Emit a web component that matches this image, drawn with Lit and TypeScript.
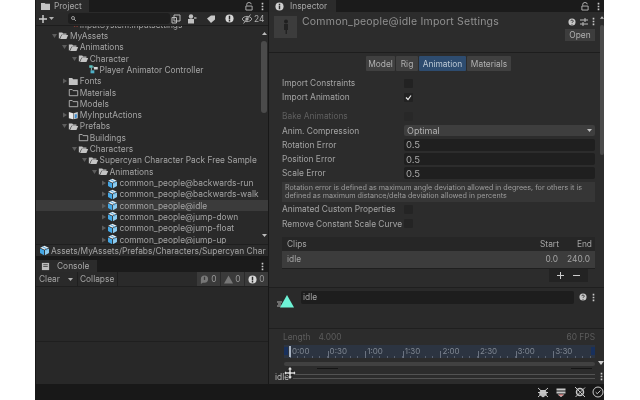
import { LitElement, css, html, svg } from 'lit';
import { customElement } from 'lit/decorators.js';

type Kind = 'open' | 'closed' | 'empty' | 'cube' | 'ctrl' | 'actions' | 'input';

interface TreeRow {
  name: string;
  depth: number;
  arrow?: 'down' | 'right';
  icon: Kind;
  selected?: boolean;
}

const ROWS: TreeRow[] = [
  { name: 'InputSystem.inputsettings', depth: 2, icon: 'input' },
  { name: 'MyAssets', depth: 1, arrow: 'down', icon: 'open' },
  { name: 'Animations', depth: 2, arrow: 'down', icon: 'open' },
  { name: 'Character', depth: 3, arrow: 'down', icon: 'open' },
  { name: 'Player Animator Controller', depth: 4, icon: 'ctrl' },
  { name: 'Fonts', depth: 2, arrow: 'right', icon: 'closed' },
  { name: 'Materials', depth: 2, icon: 'empty' },
  { name: 'Models', depth: 2, icon: 'empty' },
  { name: 'MyInputActions', depth: 2, arrow: 'right', icon: 'actions' },
  { name: 'Prefabs', depth: 2, arrow: 'down', icon: 'open' },
  { name: 'Buildings', depth: 3, icon: 'empty' },
  { name: 'Characters', depth: 3, arrow: 'down', icon: 'open' },
  { name: 'Supercyan Character Pack Free Sample', depth: 4, arrow: 'down', icon: 'open' },
  { name: 'Animations', depth: 5, arrow: 'down', icon: 'open' },
  { name: 'common_people@backwards-run', depth: 6, arrow: 'right', icon: 'cube' },
  { name: 'common_people@backwards-walk', depth: 6, arrow: 'right', icon: 'cube' },
  { name: 'common_people@idle', depth: 6, arrow: 'right', icon: 'cube', selected: true },
  { name: 'common_people@jump-down', depth: 6, arrow: 'right', icon: 'cube' },
  { name: 'common_people@jump-float', depth: 6, arrow: 'right', icon: 'cube' },
  { name: 'common_people@jump-up', depth: 6, arrow: 'right', icon: 'cube' },
];

const TIMES = ['0:00', '0:30', '1:00', '1:30', '2:00', '2:30', '3:00', '3:30'];

const rowIcon = (k: Kind) => {
  const paths = {
    open: svg`<path d="M1 3h4l1 1h4v1.500H4L2 10H1z" fill="#c4c4c4"/><path d="M4.500 6H12l-2 4.500H2.500z" fill="#c4c4c4"/>`,
    closed: svg`<path d="M1 2.500h4l1 1.300h5.500v6.700H1z" fill="#c4c4c4"/>`,
    empty: svg`<path d="M1.500 3h3.500l1 1.300h5.500v6H1.500z" fill="none" stroke="#c0c0c0"/>`,
    cube: svg`<path d="M6.500 1 11.500 3.200 6.500 5.600 1.500 3.200z" fill="#e6eef4"/><path d="M1.200 4 6 6.300V12L1.200 9.600z" fill="#45a8e6"/><path d="M11.800 4 7 6.300V12l4.800-2.400z" fill="#8ccbf0"/><path d="M4 2 9 4.400V6.400" fill="none" stroke="#3d9bd8"/>`,
    ctrl: svg`<rect x="1.500" y="1.500" width="4" height="3" fill="#5fc3c0"/><rect x="7" y="3.500" width="4.500" height="3" fill="#d8d8d8"/><rect x="3" y="7.500" width="4.500" height="3.500" fill="#4fb0c8"/><path d="M4 4.500v3M5.500 3.500H7" stroke="#9adcd8"/>`,
    actions: svg`<path d="M1 2.500 6 3.800V11L1 9.700z" fill="#e8e8e8"/><path d="M6.500 3.800 11.500 2.500V9.700L6.500 11z" fill="#d0d0d0"/><path d="M8 5h2.500v4L8 10z" fill="#3f8fd2"/>`,
    input: svg`<path d="M2 4h3v4H2z" fill="#3f8fd2"/><path d="M7 3h1.500v6H7zM10 3h1.500v6H10z" fill="#d84a3a"/>`,
  };
  return html`<svg class="ti" viewBox="0 0 13 13">${paths[k]}</svg>`;
};

const dots = html`<svg class="dots" viewBox="0 0 3 11"><path d="M.5 1h2v2h-2zM.5 4.500h2v2h-2zM.5 8h2v2h-2z" fill="#c8c8c8"/></svg>`;
const lock = html`<svg class="lock" viewBox="0 0 9 10"><path d="M2 4V2.500a2.500 2 0 0 1 5 0M1 4.500h7v4.500H1z" fill="none" stroke="#bbb"/></svg>`;
const help = html`<svg class="help" viewBox="0 0 9 9"><circle cx="4.500" cy="4.500" r="4" fill="#c8c8c8"/><path d="M3.200 3.500a1.300 1.300 0 1 1 1.900 1.200c-.5.300-.6.500-.6 1" fill="none" stroke="#282828"/><path d="M4 6.700h1v1H4z" fill="#282828"/></svg>`;
const bang = html`<svg class="bang" viewBox="0 0 10 10"><circle cx="5" cy="5" r="4.500" fill="#d8d8d8"/><path d="M4.200 2h1.600v4H4.200zM4.200 6.800h1.600v1.500H4.200z" fill="#2a2a2a"/></svg>`;
const bug = html`<svg class="stat" viewBox="0 0 12 12"><path d="M3.500 4.500h5l.8 4-3.300 2.500-3.300-2.500zM1 2l10 9M11 2 1 11M1 6.500h10" stroke="#c8c8c8" fill="#bdbdbd"/></svg>`;
const layers = html`<svg class="stat" viewBox="0 0 12 12"><path d="M1.500 2.500h9v2h-9zM1.500 5.500h9v2h-9z" fill="#c8c8c8"/><path d="M2.500 8.500h7L6 11z" fill="#e0e0e0"/><path d="M4 9h4" stroke="#d05050"/></svg>`;
const net = html`<svg class="stat" viewBox="0 0 12 12"><circle cx="6" cy="6" r="3.500" fill="none" stroke="#c8c8c8" stroke-width="1.500"/><path d="M1 1l10 10M11 1.500 1.500 11" stroke="#c8c8c8"/></svg>`;
const ok = html`<svg class="stat" viewBox="0 0 12 12"><circle cx="6" cy="6" r="5" fill="none" stroke="#c8c8c8"/><path d="M3.700 6.200 5.300 7.700 8.500 4.500" fill="none" stroke="#c8c8c8"/></svg>`;

@customElement('app-root')
export class AppRoot extends LitElement {
  static styles = css`
    :host {
      display: block;
      width: 640px;
      height: 400px;
      overflow: hidden;
      background: #fff;
      font-family: Inter, 'Liberation Sans', sans-serif;
      font-size: 8.4px;
      color: #a4a4a4;
    }
    svg { display: block; flex: none; }
    .editor {
      position: relative;
      margin-left: 35px;
      width: 569px;
      height: 400px;
      background: #181818;
      display: flex;
      flex-direction: column;
      filter: blur(0.4px);
    }
    .main { display: flex; flex: none; height: 384px; gap: 1px; }

    /* left column */
    .left { width: 232px; flex: none; display: flex; flex-direction: column; padding-left: 1px; }
    .tabbar { height: 12px; flex: none; display: flex; align-items: center; background: #1b1b1b; }
    .tab {
      height: 100%;
      display: flex;
      align-items: center;
      gap: 4px;
      background: #2b2b2b;
      color: #a8a8a8;
      box-sizing: border-box;
    }
    .tab-project { width: 53px; padding-left: 5px; }
    .tab-console { width: 61px; padding-left: 5px; gap: 7px; }
    .tab-inspector { width: 67px; padding-left: 6px; gap: 6px; }
    .tab-right { margin-left: auto; display: flex; align-items: center; gap: 8px; padding-right: 4px; }
    .dots { width: 3px; height: 9px; }
    .lock { width: 8px; height: 9px; }
    .tabicon { width: 9px; height: 9px; }

    .ptools {
      height: 13px;
      flex: none;
      display: flex;
      align-items: center;
      background: #2a2a2a;
      border-bottom: 1px solid #1d1d1d;
    }
    .plus { width: 8px; height: 8px; margin-left: 3px; }
    .caret { width: 5px; height: 3px; }
    .ptools .caret { margin-left: 2px; }
    .search {
      width: 102px;
      height: 11px;
      margin-left: 14px;
      flex: none;
      background: #1e1e1e;
      border-radius: 3px;
      display: flex;
      align-items: center;
      padding-left: 3px;
      box-sizing: border-box;
    }
    .tool { width: 10px; height: 10px; }
    .ptools .t1 { margin-left: 1px; }
    .ptools .t2 { margin-left: 6px; }
    .ptools .t3 { margin-left: 9px; }
    .ptools .bang { width: 9px; height: 9px; margin-left: 9px; }
    .ptools .t5 { margin-left: 8px; }
    .ptools .count { margin-left: 2px; color: #b0b0b0; }

    .treewrap { position: relative; height: 218px; flex: none; overflow: hidden; background: #292929; }
    .tree { margin-top: -7px; }
    .row {
      height: 11.32px;
      width: 222px;
      display: flex;
      align-items: center;
      white-space: nowrap;
    }
    .row.sel { background: #3b3b3b; }
    .arrow { width: 5px; height: 6px; margin-right: 1px; }
    .noarrow { width: 6px; flex: none; }
    .ti { width: 11px; height: 11px; margin-right: 1px; }
    .vtrack { position: absolute; right: 1px; top: 6px; width: 6px; bottom: 0; display: flex; flex-direction: column; align-items: center; }
    .thumb { width: 6px; height: 72px; margin-top: 6px; border-radius: 3px; background: #4b4b4b; }
    .up { width: 5px; height: 3px; }
    .down { margin-top: auto; margin-bottom: 7px; width: 5px; height: 3px; }

    .pathbar {
      height: 12px;
      flex: none;
      display: flex;
      align-items: center;
      padding-left: 3px;
      overflow: hidden;
      white-space: nowrap;
      background: #2a2a2a;
      border-top: 1px solid #1f1f1f;
      box-sizing: border-box;
    }
    .gutter { height: 4px; flex: none; background: #191919; }
    .console { flex: 1; display: flex; flex-direction: column; }
    .ctools {
      height: 14px;
      flex: none;
      display: flex;
      align-items: center;
      background: #2a2a2a;
      border-bottom: 1px solid #1f1f1f;
    }
    .clear { padding: 0 4px 0 3px; }
    .cdrop { width: 13px; display: flex; justify-content: center; border-right: 1px solid #1f1f1f; height: 100%; align-items: center; }
    .collapse { padding: 0 3px 0 2px; height: 100%; display: flex; align-items: center; border-right: 1px solid #1f1f1f; }
    .counters { margin-left: auto; display: flex; gap: 1px; height: 100%; }
    .counter {
      width: 23px;
      display: flex;
      align-items: center;
      justify-content: center;
      gap: 2px;
      background: #3a3a3a;
      color: #9a9a9a;
    }
    .counter svg { width: 9px; height: 9px; }
    .logs { height: 54px; flex: none; background: #282828; border-bottom: 1px solid #1f1f1f; }
    .stack { flex: 1; background: #282828; }

    /* inspector */
    .insp { flex: 1; display: flex; flex-direction: column; min-width: 0; position: relative; background: #2c2c2c; }
    .insp .tabbar { background: #1b1b1b; }
    .ihead { height: 40px; flex: none; display: flex; border-bottom: 1px solid #1d1d1d; }
    .thumbnail {
      width: 23px;
      height: 22px;
      margin: 4px 0 0 5px;
      background: #3c3c3c;
      display: flex;
      align-items: center;
      justify-content: center;
    }
    .thumbnail svg { width: 8px; height: 16px; }
    .ititle { margin: 3px 0 0 5px; font-size: 10.5px; letter-spacing: 0.2px; color: #909090; flex: 1; white-space: nowrap; }
    .iright { width: 40px; display: flex; flex-direction: column; align-items: flex-end; padding-right: 9px; flex: none; }
    .iicons { display: flex; align-items: center; gap: 4px; margin-top: 5px; }
    .help { width: 8px; height: 8px; }
    .sliders { width: 8px; height: 8px; }
    .open {
      margin-top: 3px;
      width: 30px;
      height: 12px;
      background: #3d3d3d;
      display: flex;
      align-items: center;
      justify-content: center;
      color: #b0b0b0;
    }
    .ibody { flex: 1; display: flex; flex-direction: column; padding: 3px 9px 0 13px; min-height: 0; }
    .tabs { display: flex; height: 15px; margin-left: 84px; gap: 1px; flex: none; }
    .tabs span {
      display: flex;
      align-items: center;
      justify-content: center;
      background: #404040;
      color: #b0b0b0;
      border-radius: 1px;
    }
    .tabs .active { background: #2e4c6f; color: #bcc8d4; }
    .prop { height: 14.2px; flex: none; display: flex; align-items: center; white-space: nowrap; }
    .prop .lab { width: 122px; flex: none; }
    .dim { color: #5f5f5f; }
    .check { width: 9px; height: 9px; background: #222; border-radius: 1px; display: flex; align-items: center; justify-content: center; }
    .check svg { width: 7px; height: 7px; }
    .check.off { background: #242424; }
    .dim .check.off { background: #282828; }
    .field { flex: 1; height: 12px; background: #1f1f1f; border-radius: 2px; display: flex; align-items: center; padding-left: 2px; color: #a8a8a8; font-size: 9.5px; }
    .drop { flex: 1; height: 11px; background: #3e3e3e; border-radius: 2px; display: flex; align-items: center; padding: 0 3px; color: #b0b0b0; justify-content: space-between; font-size: 9px; }
    .hint {
      height: 20px;
      margin-top: 2px;
      background: #363636;
      font-size: 7.2px;
      line-height: 8.6px;
      padding: 1.5px 3px;
      box-sizing: border-box;
      color: #9c9c9c;
      flex: none;
      white-space: nowrap;
    }
    .clips { margin-top: 6px; flex: none; }
    .chead { height: 14px; background: #262626; display: flex; align-items: center; padding: 0 3px 0 5px; }
    .chead .st { margin-left: auto; }
    .chead .en { margin-left: 18px; }
    .crow { height: 17px; background: #3c3c3c; display: flex; align-items: center; padding: 0 5px; border-bottom: 1px solid #1f1f1f; }
    .crow .st { margin-left: auto; }
    .crow .en { margin-left: 9px; }
    .cfoot { margin-left: auto; margin-right: 7px; width: 39px; height: 13px; background: #232323; display: flex; align-items: center; justify-content: space-around; padding: 0 4px; box-sizing: border-box; }
    .cfoot svg { width: 7px; height: 7px; }

    .pv {
      margin: 5px -9px 0 -13px;
      height: 37px;
      flex: none;
      display: flex;
      border-top: 1px solid #1f1f1f;
      border-bottom: 1px solid #1f1f1f;
      background: #2a2a2a;
      padding: 3px 9px 0 8px;
    }
    .pvicon { width: 17px; height: 13px; margin-top: 4px; }
    .pvfield { flex: 1; height: 13px; margin: 0 5px 0 7px; background: #1d1d1d; border-radius: 2px; padding-left: 2px; display: flex; align-items: center; }
    .pvright { display: flex; align-items: center; gap: 5px; height: 13px; }
    .lenrow { height: 15px; flex: none; display: flex; align-items: center; color: #5c5c5c; padding-left: 1px; margin-top: 1px; }
    .lenrow .v { margin-left: 8px; }
    .lenrow .fps { margin-left: auto; }
    .time {
      height: 13px;
      margin-left: 2px;
      flex: none;
      background: #2c3441;
      display: flex;
      align-items: center;
      padding-left: 6px;
      position: relative;
    }
    .time span {
      width: 37.6px;
      flex: none;
      height: 100%;
      display: flex;
      align-items: center;
      padding-left: 2px;
      box-sizing: border-box;
      font-size: 8px;
      color: #7f8792;
      background:
        linear-gradient(#6a7280, #6a7280) 0 100% / 1px 7px no-repeat,
        repeating-linear-gradient(90deg, transparent 0 6.52px, #596170 6.52px 7.52px) 0 100% / 100% 2px no-repeat;
    }
    .playhead { position: absolute; left: 5px; top: 1px; width: 2px; height: 11px; background: #a9b4c4; }
    .mk { position: absolute; top: 2px; width: 4px; height: 8px; background: #18305c; }
    .barrow { height: 4px; margin: 4px 0 0 2px; flex: none; background: #414141; border-radius: 2px; }
    .blip { height: 1px; margin-top: 2px; flex: none; position: relative; }
    .blip i { position: absolute; left: 35px; width: 21px; height: 1px; background: #151515; }
    .blip b { position: absolute; right: 3px; width: 21px; height: 1px; background: #151515; }
    .foot { height: 14px; margin: 1px -9px 0 -7px; display: flex; align-items: center; flex: none; color: #b8b8b8; padding-right: 1px; background: #2c2c2c; }
    .line { flex: 1; height: 3px; margin: 0 5px 0 4px; border-top: 1px solid #525252; border-bottom: 1px solid #525252; }
    .ibar { position: absolute; right: 0; top: 25px; width: 4px; height: 130px; background: #4a4a4a; border-radius: 2px; }
    .iup { position: absolute; right: 0; top: 16px; width: 4px; height: 3px; }
    .downtri { position: absolute; right: 0; top: 361px; width: 6px; height: 4px; }
    .cursor { position: absolute; left: 15px; top: 366px; width: 12px; height: 14px; }

    .status { flex: 1; display: flex; align-items: center; justify-content: flex-end; gap: 6.5px; }
    .stat { width: 12px; height: 12px; }
  `;

  private row(r: TreeRow) {
    const pad = 6 + r.depth * 9.9;
    return html`<div class="row ${r.selected ? 'sel' : ''}" style="padding-left:${pad}px">
      ${r.arrow === 'down'
        ? html`<svg class="arrow" viewBox="0 0 5 6"><path d="M0 1h5L2.500 5z" fill="#5c5c5c"/></svg>`
        : r.arrow === 'right'
          ? html`<svg class="arrow" viewBox="0 0 5 6"><path d="M1 .5 5 3 1 5.500z" fill="#5c5c5c"/></svg>`
          : html`<span class="noarrow"></span>`}
      ${rowIcon(r.icon)}<span>${r.name}</span>
    </div>`;
  }

  render() {
    return html`<div class="editor">
      <div class="main">
        <div class="left">
          <div class="tabbar">
            <div class="tab tab-project">
              <svg class="tabicon" viewBox="0 0 10 10"><path d="M0 1h4l1 1h5v7H0z" fill="#c4c4c4"/></svg>Project
            </div>
            <div class="tab-right">${lock}${dots}</div>
          </div>
          <div class="ptools">
            <svg class="plus" viewBox="0 0 8 8"><path d="M3.300 0h1.400v3.300H8v1.400H4.700V8H3.300V4.700H0V3.300h3.300z" fill="#d0d0d0"/></svg>
            <svg class="caret" viewBox="0 0 5 3"><path d="M0 0h5L2.500 3z" fill="#b0b0b0"/></svg>
            <div class="search">
              <svg width="5" height="5" viewBox="0 0 5 5"><circle cx="2" cy="2" r="1.500" fill="none" stroke="#999"/><path d="M3 3l2 2" stroke="#999"/></svg>
            </div>
            <svg class="tool t1" viewBox="0 0 10 10"><path d="M3 1h6v6H3zM1 3.500h4.500V9H1z" fill="none" stroke="#b8b8b8"/></svg>
            <svg class="tool t2" viewBox="0 0 10 10"><circle cx="4" cy="2.500" r="2.200" fill="#c0c0c0"/><path d="M1 5h6v4.500H1z" fill="#c0c0c0"/><path d="M7 3h2.500v2H7z" fill="#8a8a8a"/></svg>
            <svg class="tool t3" viewBox="0 0 10 10"><path d="M1 4.500 5 1.500h4v4l-4 3.500z" fill="#c8c8c8"/></svg>
            ${bang}
            <svg class="tool t5" viewBox="0 0 10 10"><path d="M0 5c2-3.500 8-3.500 10 0-2 3.500-8 3.500-10 0z" fill="none" stroke="#a8a8a8"/><circle cx="5" cy="5" r="1.700" fill="#a8a8a8"/><path d="M1.500 9.500 8.500 .5" stroke="#a8a8a8"/></svg>
            <span class="count">24</span>
          </div>
          <div class="treewrap">
            <div class="tree">${ROWS.map((r) => this.row(r))}</div>
            <div class="vtrack">
              <svg class="up" viewBox="0 0 5 3"><path d="M0 3h5L2.500 0z" fill="#bbb"/></svg>
              <div class="thumb"></div>
              <svg class="down" viewBox="0 0 5 3"><path d="M0 0h5L2.500 3z" fill="#bbb"/></svg>
            </div>
          </div>
          <div class="pathbar">${rowIcon('cube')}<span>Assets/MyAssets/Prefabs/Characters/Supercyan Char</span></div>
          <div class="gutter"></div>
          <div class="console">
            <div class="tabbar">
              <div class="tab tab-console">
                <svg class="tabicon" viewBox="0 0 10 10"><path d="M1 1h8v8H1z" fill="#bdbdbd"/><path d="M2.500 3h5M2.500 5h5" stroke="#4a4a4a"/></svg>Console
              </div>
              <div class="tab-right">${dots}</div>
            </div>
            <div class="ctools">
              <span class="clear">Clear</span>
              <span class="cdrop"><svg class="caret" viewBox="0 0 5 3"><path d="M0 0h5L2.500 3z" fill="#b0b0b0"/></svg></span>
              <span class="collapse">Collapse</span>
              <div class="counters">
                <span class="counter"><svg viewBox="0 0 10 10"><path d="M1 4.500a4 4 0 1 1 4 4H3L1 10z" fill="#777"/><path d="M4.300 2h1.400v3.500H4.300z" fill="#3a3a3a"/></svg>0</span>
                <span class="counter"><svg viewBox="0 0 10 10"><path d="M5 .5 10 9.500H0z" fill="#777"/></svg>0</span>
                <span class="counter">${bang}0</span>
              </div>
            </div>
            <div class="logs"></div>
            <div class="stack"></div>
          </div>
        </div>

        <div class="insp">
          <div class="tabbar">
            <div class="tab tab-inspector">
              <svg class="tabicon" viewBox="0 0 10 10"><circle cx="5" cy="5" r="4.500" fill="#d0d0d0"/><path d="M4.200 2h1.600v1.500H4.200zM4.200 4.300h1.600V8H4.200z" fill="#2a2a2a"/></svg>Inspector
            </div>
            <div class="tab-right">${lock}${dots}</div>
          </div>
          <div class="ihead">
            <div class="thumbnail"><svg viewBox="0 0 8 16"><circle cx="4" cy="2.500" r="2" fill="#1f1f1f"/><path d="M2 5h4v6H5v4H3.500v-4H2z" fill="#222"/></svg></div>
            <div class="ititle">Common_people@idle Import Settings</div>
            <div class="iright">
              <div class="iicons">
                ${help}
                <svg class="sliders" viewBox="0 0 8 8"><path d="M0 2h8M0 6h8" stroke="#bbb"/><path d="M5 0v4M3 4v4" stroke="#bbb"/></svg>
                ${dots}
              </div>
              <div class="open">Open</div>
            </div>
          </div>
          <div class="ibody">
            <div class="tabs">
              <span style="width:29px">Model</span>
              <span style="width:22px">Rig</span>
              <span style="width:47px" class="active">Animation</span>
              <span style="width:44px">Materials</span>
            </div>
            <div style="height:5px;flex:none"></div>
            <div class="prop"><span class="lab">Import Constraints</span><span class="check"></span></div>
            <div class="prop"><span class="lab">Import Animation</span><span class="check"><svg viewBox="0 0 7 7"><path d="M1 3.500 3 5.500 6 1.500" fill="none" stroke="#e8e8e8" stroke-width="1.200"/></svg></span></div>
            <div style="height:5px;flex:none"></div>
            <div class="prop dim"><span class="lab">Bake Animations</span><span class="check off"></span></div>
            <div class="prop"><span class="lab">Anim. Compression</span><span class="drop">Optimal<svg class="caret" viewBox="0 0 5 3"><path d="M0 0h5L2.500 3z" fill="#c0c0c0"/></svg></span></div>
            <div class="prop"><span class="lab">Rotation Error</span><span class="field">0.5</span></div>
            <div class="prop"><span class="lab">Position Error</span><span class="field">0.5</span></div>
            <div class="prop"><span class="lab">Scale Error</span><span class="field">0.5</span></div>
            <div class="hint">Rotation error is defined as maximum angle deviation allowed in degrees, for others it is<br />defined as maximum distance/delta deviation allowed in percents</div>
            <div class="prop"><span class="lab">Animated Custom Properties</span><span class="check off"></span></div>
            <div class="prop"><span class="lab">Remove Constant Scale Curve</span><span class="check off"></span></div>
            <div class="clips">
              <div class="chead"><span>Clips</span><span class="st">Start</span><span class="en">End</span></div>
              <div class="crow"><span>idle</span><span class="st">0.0</span><span class="en">240.0</span></div>
              <div class="cfoot">
                <svg viewBox="0 0 7 7"><path d="M3 0h1v3h3v1H4v3H3V4H0V3h3z" fill="#ccc"/></svg>
                <svg viewBox="0 0 7 7"><path d="M0 3h7v1H0z" fill="#ccc"/></svg>
              </div>
            </div>
            <div class="pv">
              <svg class="pvicon" viewBox="0 0 17 13"><path d="M10 0 17 12.500H3z" fill="#6ef3d6"/><path d="M0 7h5M1 9h3M0 11h4" stroke="#b0b0b0"/></svg>
              <div class="pvfield">idle</div>
              <div class="pvright">${help}${dots}</div>
            </div>
            <div class="lenrow"><span>Length</span><span class="v">4.000</span><span class="fps">60 FPS</span></div>
            <div class="time">
              ${TIMES.map((t) => html`<span>${t}</span>`)}
              <i class="mk" style="left:0"></i><i class="mk" style="right:0"></i>
              <i class="playhead"></i>
            </div>
            <div class="barrow"></div>
            <div class="blip"><i></i><b></b></div>
            <div class="foot"><span>idle</span><span class="line"></span>${dots}</div>
          </div>
          <div class="iup"><svg viewBox="0 0 5 3" width="4" height="3"><path d="M0 3h5L2.500 0z" fill="#bbb"/></svg></div>
          <div class="ibar"></div>
          <div class="downtri"><svg viewBox="0 0 6 4" width="6" height="4"><path d="M0 0h6L3 4z" fill="#ccc"/></svg></div>
          <svg class="cursor" viewBox="0 0 11 12"><path d="M5.500 0 8 3H6.500v2H9V3.500L11 6 9 8.500V7H6.500v2H8l-2.500 3L3 9h1.500V7H2v1.500L0 6l2-2.500V5h2.500V3H3z" fill="#ddd" stroke="#111" stroke-width=".6"/></svg>
        </div>
      </div>
      <div class="status">${bug}${layers}${net}${ok}</div>
    </div>`;
  }
}
